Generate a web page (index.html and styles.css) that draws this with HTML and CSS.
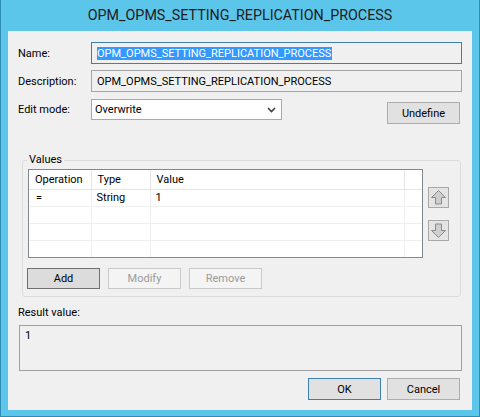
FILE: index.html
```html
<!DOCTYPE html>
<html>
    <head>
        <title>OPM_OPMS_SETTING_REPLICATION_PROCESS</title>
        <link rel="stylesheet" href="styles.css">
    </head>
    <body>
        <div class="window">
            <div class="titlebar">OPM_OPMS_SETTING_REPLICATION_PROCESS</div>
            <div class="client">
                <div class="row">
                    <span class="label">Name:</span>
                    <div class="input focused"><span class="selected">OPM_OPMS_SETTING_REPLICATION_PROCESS</span></div>
                </div>
                <div class="row row-desc">
                    <span class="label">Description:</span>
                    <div class="input readonly">OPM_OPMS_SETTING_REPLICATION_PROCESS</div>
                </div>
                <div class="row row-mode">
                    <span class="label label-mode">Edit mode:</span>
                    <div class="select">
                        <span>Overwrite</span>
                        <svg width="9" height="6" viewBox="0 0 9 6"><path d="M1 1 L4.5 4.5 L8 1" fill="none" stroke="#404040" stroke-width="1.6"/></svg>
                    </div>
                    <button class="btn undefine">Undefine</button>
                </div>

                <div class="group">
                    <span class="group-title">Values</span>
                    <div class="group-body">
                        <div class="grid">
                            <table>
                                <colgroup>
                                    <col class="col-op">
                                    <col class="col-type">
                                    <col class="col-value">
                                    <col>
                                </colgroup>
                                <thead>
                                    <tr><th>Operation</th><th>Type</th><th>Value</th><th></th></tr>
                                </thead>
                                <tbody>
                                    <tr><td class="op">=</td><td>String</td><td>1</td><td></td></tr>
                                    <tr><td></td><td></td><td></td><td></td></tr>
                                    <tr><td></td><td></td><td></td><td></td></tr>
                                    <tr><td></td><td></td><td></td><td></td></tr>
                                </tbody>
                            </table>
                        </div>
                        <div class="arrows">
                            <button class="arrow-btn up">
                                <svg width="19" height="19" viewBox="0 0 19 19"><path d="M9.5 2.5 L16.5 9.5 L12.5 9.5 L12.5 16 L6.5 16 L6.5 9.5 L2.5 9.5 Z" fill="#cfcfcf" stroke="#8a8a8a" stroke-width="1" stroke-linejoin="round"/></svg>
                            </button>
                            <button class="arrow-btn down">
                                <svg width="19" height="19" viewBox="0 0 19 19"><path d="M9.5 16.5 L16.5 9.5 L12.5 9.5 L12.5 3 L6.5 3 L6.5 9.5 L2.5 9.5 Z" fill="#cfcfcf" stroke="#8a8a8a" stroke-width="1" stroke-linejoin="round"/></svg>
                            </button>
                        </div>
                    </div>
                    <div class="group-buttons">
                        <button class="btn btn-focus">Add</button>
                        <button class="btn" disabled>Modify</button>
                        <button class="btn" disabled>Remove</button>
                    </div>
                </div>

                <div class="result-label">Result value:</div>
                <div class="result-box">1</div>

                <div class="footer">
                    <button class="btn btn-default">OK</button>
                    <button class="btn">Cancel</button>
                </div>
            </div>
        </div>
    </body>
</html>
```
FILE: styles.css
```css
body{
    margin: 0;
}
.window{
    width: 480px;
    height: 417px;
    box-sizing: border-box;
    background-color: #5cc6ea;
    border-left: 1px solid #2f8db3;
    border-right: 1px solid #2f8db3;
    border-bottom: 1px solid #2f8db3;
    padding: 0 7px 6px 7px;

    display: flex;
    flex-direction: column;
}
.titlebar{
    height: 31px;
    flex-shrink: 0;

    display: flex;
    align-items: center;
    justify-content: center;

    font-family: Roboto, sans-serif;
    font-size: 14.3px;
    color: #1c1c1c;
    padding-bottom: 1px;
    box-sizing: border-box;
}
.client{
    flex: 1;
    background-color: #f0f0f0;
    padding: 11px 10px 0 10px;

    font-family: Roboto, sans-serif;
    font-size: 11px;
    color: #000;
}
.row{
    display: flex;
    align-items: center;
}
.row-desc{
    margin-top: 6px;
}
.row-mode{
    margin-top: 7px;
    align-items: flex-start;
}
.label{
    width: 73px;
    flex-shrink: 0;
}
.label-mode{
    line-height: 21px;
}
.input{
    width: 371px;
    height: 22px;
    box-sizing: border-box;
    border: 1px solid #a5a5a5;
    padding-left: 5px;

    display: flex;
    align-items: center;
}
.focused{
    border-color: #3c7fb1;
    background-color: #f0f0f0;
}
.readonly{
    background-color: #f0f0f0;
}
.selected{
    background-color: #3399ff;
    color: white;
    line-height: 13px;
    padding-right: 1px;
}
.select{
    width: 191px;
    height: 21px;
    box-sizing: border-box;
    border: 1px solid #a9a9a9;
    background-color: white;
    padding: 0 5px 0 3px;

    display: flex;
    align-items: center;
    justify-content: space-between;
}
.btn{
    width: 73px;
    height: 22px;
    box-sizing: border-box;
    border: 1px solid #adadad;
    background-color: #e1e1e1;
    font-family: Roboto, sans-serif;
    font-size: 11px;
    color: #000;
    padding: 0;
}
.btn:disabled{
    background-color: #f4f4f4;
    border-color: #c9c9c9;
    color: #9b9b9b;
}
.btn-focus{
    border-color: #707070;
    background-color: #dcdcdc;
}
.btn-default{
    border-color: #3c7fb1;
}
.undefine{
    margin-left: auto;
    margin-right: 2px;
    margin-top: 3px;
}
.group{
    position: relative;
    margin-top: 36px;
    margin-left: 4px;
    width: 439px;
    height: 137px;
    box-sizing: border-box;
    border: 1px solid #dcdcdc;
    border-radius: 3px;
    padding: 8px 0 0 5px;
}
.group-title{
    position: absolute;
    top: -9px;
    left: 4px;
    padding: 0 2px;
    background-color: #f0f0f0;
    line-height: 15px;
}
.group-body{
    display: flex;
}
.grid{
    width: 395px;
    height: 89px;
    box-sizing: border-box;
    border: 1px solid #828790;
    background-color: white;
    overflow: hidden;
}
table{
    width: 393px;
    table-layout: fixed;
    border-collapse: collapse;
    font-size: 11px;
}
.col-op{
    width: 62px;
}
.col-type{
    width: 59px;
}
.col-value{
    width: 254px;
}
th{
    height: 19px;
    padding: 0 0 0 6px;
    text-align: left;
    font-weight: normal;
    border-right: 1px solid #e5e5e5;
    border-bottom: 1px solid #e5e5e5;
    box-sizing: border-box;
}
td{
    height: 17px;
    padding: 0 0 0 5px;
    border-right: 1px solid #efefef;
    border-bottom: 1px solid #efefef;
    box-sizing: border-box;
}
td.op{
    padding-left: 7px;
}
th:last-child, td:last-child{
    border-right: none;
}
.arrows{
    margin-left: 5px;
    display: flex;
    flex-direction: column;
}
.arrow-btn{
    width: 21px;
    height: 21px;
    box-sizing: border-box;
    border: 1px solid #a8a8a8;
    background-color: #e4e4e4;
    padding: 0;

    display: flex;
    align-items: center;
    justify-content: center;
}
.up{
    margin-top: 18px;
}
.down{
    margin-top: 12px;
}
.group-buttons{
    display: flex;
    gap: 8px;
    margin-top: 10px;
    margin-left: -1px;
}
.group-buttons .btn{
    height: 21px;
}
.result-label{
    margin-top: 8px;
    line-height: 15px;
}
.result-box{
    margin-top: 5px;
    margin-left: 1px;
    width: 443px;
    height: 46px;
    box-sizing: border-box;
    border: 1px solid #a0a0a0;
    padding: 3px 5px;
}
.footer{
    margin-top: 7px;
    margin-right: 2px;

    display: flex;
    justify-content: flex-end;
    gap: 6px;
}
```
